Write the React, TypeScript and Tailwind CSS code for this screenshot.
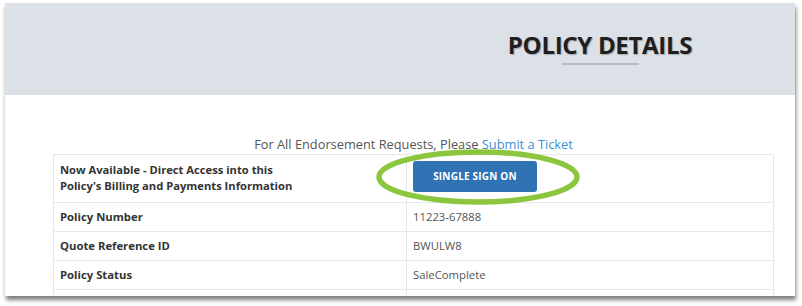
export default function App() {
  const rows = [
    { label: "Policy Number", value: "11223-67888" },
    { label: "Quote Reference ID", value: "BWULW8" },
    { label: "Policy Status", value: "SaleComplete" },
  ];

  return (
    <div
      className="w-[802px] h-[306px] bg-white overflow-hidden pt-[3px] pl-[5px]"
      style={{ fontFamily: '"Open Sans", "Liberation Sans", sans-serif' }}
    >
      <div className="relative w-[790px] h-[293px] bg-white overflow-hidden shadow-[1px_4px_4px_rgba(0,0,0,0.5)]">
        {/* header */}
        <div className="h-[92px] bg-[#dce0e7] pl-[400px] pt-[26px] flex flex-col items-center">
          <h1 className="text-[24px] leading-[32px] font-bold tracking-[-0.3px] text-[#1f1f1f] [text-shadow:1px_1px_1px_rgba(0,0,0,0.25)]">
            POLICY DETAILS
          </h1>
          <div className="mt-[2px] w-[77px] h-[2px] bg-[#b7bcc6]" />
        </div>

        {/* body */}
        <div className="pt-[40px] pl-[48px]">
          <p className="w-[721px] text-center text-[12.8px] leading-[19px] text-[#555]">
            For All Endorsement Requests, Please{" "}
            <span className="text-[#3a8fd0]">Submit a Ticket</span>
          </p>
          <div className="w-[721px] border border-[#e8e8e8] border-b-0">
            <div className="flex h-[48px] border-b border-[#e8e8e8]">
              <div className="w-[353px] border-r border-[#e8e8e8] px-[6px] pt-[7px] text-[11.2px] leading-[16px] font-bold text-[#333]">
                Now Available - Direct Access into this
                <br />
                Policy's Billing and Payments Information
              </div>
              <div className="flex-1 pl-[6px] pt-[6px]">
                <button className="w-[124px] h-[31px] rounded-[3px] bg-[#2f73b4] text-white text-[10px] font-bold tracking-[0.2px]">
                  SINGLE SIGN ON
                </button>
              </div>
            </div>
            {rows.map((r) => (
              <div key={r.label} className="flex h-[29px] border-b border-[#e8e8e8]">
                <div className="w-[353px] border-r border-[#e8e8e8] px-[6px] flex items-center text-[11.3px] font-bold text-[#333]">
                  {r.label}
                </div>
                <div className="flex-1 px-[6px] flex items-center text-[11.3px] text-[#555]">
                  {r.value}
                </div>
              </div>
            ))}
            <div className="flex h-[29px]">
              <div className="w-[353px] border-r border-[#e8e8e8]" />
              <div className="flex-1" />
            </div>
          </div>
        </div>

        {/* highlight ellipse */}
        <svg
          className="absolute left-[369px] top-[144px]"
          width="208"
          height="60"
          viewBox="0 0 208 60"
        >
          <ellipse
            cx="104"
            cy="30"
            rx="99"
            ry="25"
            fill="none"
            stroke="#8cc63f"
            strokeWidth="5.5"
          />
        </svg>
      </div>
    </div>
  );
}
